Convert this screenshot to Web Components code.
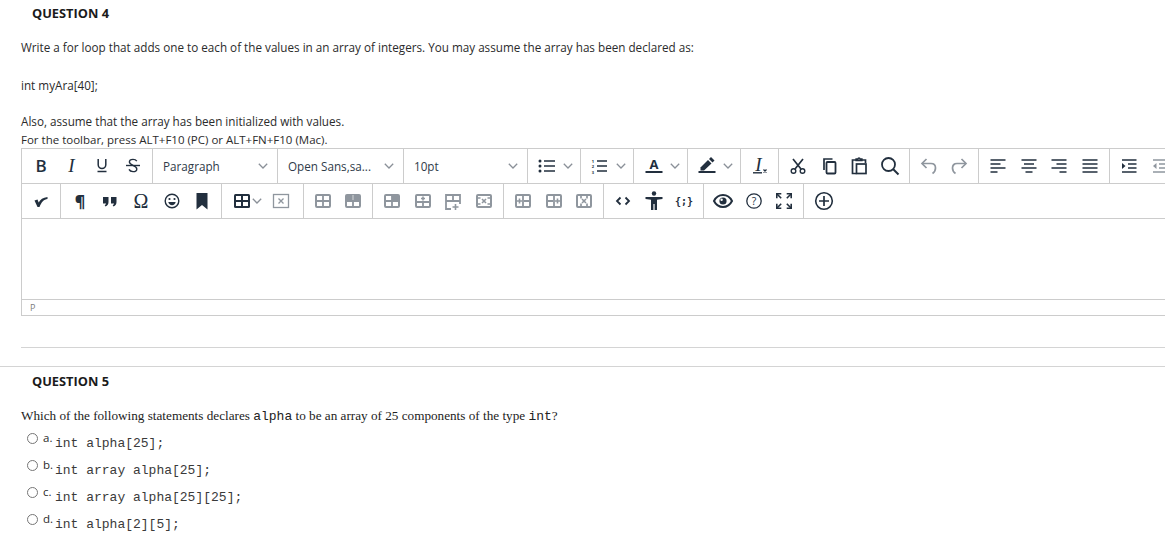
<!doctype html>
<html>
<head>
<meta charset="utf-8">
<title>Question 4 and 5</title>
<style>
html, body { margin: 0; padding: 0; background: #fff; overflow: hidden; }
body { width: 1165px; height: 554px; font-family: "Open Sans", sans-serif; color: #262626; }
</style>
</head>
<body>
<quiz-question heading="QUESTION 4">
  <quiz-line top="9" height="20">Write a for loop that adds one to each of the values in an array of integers. You may assume the array has been declared as:</quiz-line>
  <quiz-line top="18" height="20">int myAra[40];</quiz-line>
  <quiz-line top="16" height="20">Also, assume that the array has been initialized with values.</quiz-line>
  <quiz-line top="0" height="17" size="11.5">For the toolbar, press ALT+F10 (PC) or ALT+FN+F10 (Mac).</quiz-line>
  <rich-editor></rich-editor>
</quiz-question>
<quiz-question heading="QUESTION 5" ruled>
  <mc-prompt>Which of the following statements declares <code>alpha</code> to be an array of 25 components of the type <code>int</code>?</mc-prompt>
  <mc-option letter="a." code="int alpha[25];"></mc-option>
  <mc-option letter="b." code="int array alpha[25];"></mc-option>
  <mc-option letter="c." code="int array alpha[25][25];"></mc-option>
  <mc-option letter="d." code="int alpha[2][5];"></mc-option>
</quiz-question>
<script>
const dark = "#222f3e"
const grey = "#8f969e"
const stroke = (d, w = 2, col = "currentColor") =>
  `<path d="${d}" fill="none" stroke="${col}" stroke-width="${w}"/>`
const fill = (d) => `<path d="${d}" fill="currentColor"/>`
const label = (t, x, y, size, extra = "") =>
  `<text x="${x}" y="${y}" font-size="${size}" text-anchor="middle" fill="currentColor" ${extra}>${t}</text>`
const box = (x, y, w, h, col = "currentColor") =>
  `<rect x="${x}" y="${y}" width="${w}" height="${h}" fill="${col}"/>`
const sans = `font-family="Open Sans, sans-serif"`
const serifItalic = `font-family="Liberation Serif, serif" font-style="italic"`
// frame used by all the table icons
const grid = (inner) =>
  `<rect x="5" y="6" width="14" height="12" rx="1" fill="none" stroke="currentColor" stroke-width="2"/>${inner}`
const icons = {
  bold: label("B", 12, 18, 17, `${sans} font-weight="600"`),
  italic: label("I", 11.5, 18, 19, serifItalic),
  underline: stroke("M8.2 5v5.7a3.8 3.8 0 0 0 7.6 0V5", 1.5) + stroke("M7.5 17.5h9", 1.5),
  strike: stroke("M15.8 7.2C15 6 13.7 5.4 12 5.4c-2.2 0-3.6 1-3.6 2.7 0 3.4 7.4 3 7.4 6.8 0 1.7-1.6 2.7-3.8 2.7-1.8 0-3.3-.7-4-2.2", 1.4) + stroke("M5 11.5h14", 1.4),
  bullets: fill("M5 5.5a1.5 1.5 0 1 1 0 3 1.5 1.5 0 0 1 0-3zm0 5a1.5 1.5 0 1 1 0 3 1.5 1.5 0 0 1 0-3zm0 5a1.5 1.5 0 1 1 0 3 1.5 1.5 0 0 1 0-3z") + stroke("M9 7h11M9 12h11M9 17h11", 1.7),
  numlist: label("1", 5, 8.5, 4, `${sans} font-weight="700"`) + label("2", 5, 14, 4, `${sans} font-weight="700"`) + label("3", 5, 19.5, 4, `${sans} font-weight="700"`) + stroke("M9 7h10M9 12h10M9 17h10", 1.7),
  forecolor: label("A", 12, 15, 13, `${sans} font-weight="700"`) + box(3.5, 17, 17, 2),
  hilite: fill("M5.5 13.5L13 6l3.5 3.5-7.5 7H5.5z") + fill("M14 5l2-2 3.5 3.5-2 2z") + box(3.5, 17, 17, 2),
  clear: label("I", 10.5, 16.5, 19, serifItalic) + stroke("M5 18.8h9", 1.4) + stroke("M15.5 15.5l3 3M18.5 15.5l-3 3", 1.3),
  cut: `<circle cx="7.5" cy="17" r="2.3" fill="none" stroke="currentColor" stroke-width="1.4"/><circle cx="16.5" cy="17" r="2.3" fill="none" stroke="currentColor" stroke-width="1.4"/>` + stroke("M9 15L17 5M15 15L7 5", 1.7),
  copy: stroke("M15.5 5H7v11", 1.7) + `<rect x="9.5" y="8" width="9" height="11.5" rx="1" fill="none" stroke="currentColor" stroke-width="1.8"/>`,
  paste: stroke("M9 6H5.5v13.5h4", 1.7) + stroke("M9 6.5V5h2a1 1 0 0 1 2 0h2v1.5H9z", 1.3) + stroke("M15 6h3.5v3", 1.7) + `<rect x="9.5" y="10" width="9.5" height="9.5" fill="none" stroke="currentColor" stroke-width="1.7"/>`,
  search: `<circle cx="10.5" cy="10.5" r="6.5" fill="none" stroke="currentColor" stroke-width="1.8"/>` + stroke("M15 15l5.5 5.5", 2),
  undo: stroke("M9.5 5L5 9.5 9.5 14", 1.7) + stroke("M5.5 9.5H14c3 0 4.5 2 4.5 4.5s-1.5 4.5-3 5.5", 1.7),
  redo: stroke("M14.5 5L19 9.5 14.5 14", 1.7) + stroke("M18.5 9.5H10c-3 0-4.5 2-4.5 4.5s1.5 4.5 3 5.5", 1.7),
  alignl: stroke("M4.5 6h15M4.5 10h10M4.5 14h15M4.5 18h7", 1.7),
  alignc: stroke("M4.5 6h15M7 10h10M4.5 14h15M8.5 18h7", 1.7),
  alignr: stroke("M4.5 6h15M9.5 10h10M4.5 14h15M12.5 18h7", 1.7),
  alignj: stroke("M4.5 6h15M4.5 10h15M4.5 14h15M4.5 18h15", 1.7),
  indent: stroke("M5 6h14.5M11 10h8.5M11 14h8.5M5 18h14.5", 1.7) + fill("M5 9l3.5 3L5 15z"),
  outdent: stroke("M5 6h14.5M11 10h8.5M11 14h8.5M5 18h14.5", 1.7) + fill("M8.5 9L5 12l3.5 3z"),
  check: fill("M5.5 11.5l3-1 1.2 3c1.5-3 4.3-5 8.8-5.5v2c-3.500.3-6 3-8 8H8.5z"),
  para: label("¶", 12, 17.5, 16, `${sans} font-weight="800"`),
  quote: fill("M5 8h5.5v5c0 2-1 3.5-3 4.5l-.8-1.3c.8-.4 1.3-1 1.3-1.7H5zM13 8h5.5v5c0 2-1 3.5-3 4.5l-.8-1.3c.8-.4 1.3-1 1.3-1.7H13z"),
  omega: label("Ω", 12, 19, 20, `font-family="Liberation Serif, serif"`),
  smile: `<circle cx="12" cy="12" r="6.8" fill="none" stroke="currentColor" stroke-width="1.4"/><circle cx="9.5" cy="10" r="1.1" fill="currentColor"/><circle cx="14.5" cy="10" r="1.1" fill="currentColor"/>` + fill("M8.3 13h7.4c-.3 2-1.8 3.2-3.7 3.2S8.6 15 8.3 13z"),
  bookmark: fill("M6.5 4h11v16.5L12 16l-5.5 4.5z"),
  table: `<rect x="4" y="5" width="16" height="14" rx="1.5" fill="currentColor"/>` + box(6, 7, 5, 4, "#fff") + box(13, 7, 5, 4, "#fff") + box(6, 13, 5, 4, "#fff") + box(13, 13, 5, 4, "#fff"),
  tabledel: `<rect x="4.5" y="5.5" width="15" height="13" fill="none" stroke="currentColor" stroke-width="1.3"/>` + stroke("M9.5 9.5l5 5M14.5 9.5l-5 5", 1.3),
  rowprops: grid(stroke("M12 6v12M5 12h14", 1.8)),
  cellprops: grid(box(5, 6, 14, 6) + box(11.4, 6, 1.2, 6, "#c9ccd0") + stroke("M12 12v6M5 12h14", 1.8)),
  merge: grid(box(12, 6, 7, 6) + stroke("M12 6v12M5 12h14", 1.8)),
  rowbefore: grid(stroke("M5 13h14M12 13v5", 1.8) + stroke("M12 7.5v4M10 9.5h4", 1.6)),
  rowafter: stroke("M10 20H5V6h14v9M5 12h14M12 6v6", 1.8) + stroke("M14.5 15v6M11.5 18h6", 1.6),
  rowdel: grid(stroke("M5 9h3.5M15.5 9H19M5 15h3.5M15.5 15H19", 1.7) + stroke("M10 10l4 4M14 10l-4 4", 1.6)),
  colbefore: grid(stroke("M12 6v12M13 12h6", 1.8) + stroke("M8.5 9.5v5M6 12h5", 1.6)),
  colafter: grid(stroke("M12 6v12M5 12h6", 1.8) + stroke("M15.5 9.5v5M13 12h5", 1.6)),
  coldel: grid(stroke("M9 6v3.5M9 14.5V18M15 6v3.5M15 14.5V18", 1.7) + stroke("M10 10l4 4M14 10l-4 4", 1.6)),
  code: stroke("M9.5 8.5L6 12l3.5 3.5M14.5 8.5L18 12l-3.5 3.5", 1.8),
  a11y: `<circle cx="12" cy="4.5" r="2.2" fill="currentColor"/>` + fill("M3.5 8h17v2L15 10.8V21h-2.4v-6h-1.2v6H9V10.8L3.5 10z"),
  template: label("{;}", 12, 15.5, 10, `font-family="DejaVu Sans Mono, monospace" font-weight="700"`),
  preview: stroke("M3 12c2-4 5.3-6 9-6s7 2 9 6c-2 4-5.3 6-9 6s-7-2-9-6z", 2) + `<circle cx="12" cy="12" r="3.6" fill="currentColor"/><circle cx="10.6" cy="10.8" r="1.2" fill="#fff"/>`,
  help: `<circle cx="12" cy="12" r="7.2" fill="none" stroke="currentColor" stroke-width="1.3"/>` + label("?", 12, 15.8, 10.5, `${sans} font-weight="400"`),
  fullscreen: stroke("M4.8 9.3V4.8h4.5M19.2 9.3V4.8h-4.5M4.8 14.7v4.5h4.5M19.2 14.7v4.5h-4.5", 1.6) + stroke("M5 5l4.2 4.2M19 5l-4.2 4.2M5 19l4.2-4.2M19 19l-4.2-4.2", 1.6),
  plus: `<circle cx="12" cy="12" r="8.3" fill="none" stroke="currentColor" stroke-width="1.6"/>` + stroke("M12 7v10M7 12h10", 1.7),
}
const chevron = `<svg width="10" height="6" viewBox="0 0 10 6"><path d="M.8.8L5 5l4.2-4.2" fill="none" stroke="#8a9098" stroke-width="1.3"/></svg>`

class QuizQuestion extends HTMLElement {
  constructor() {
    super()
    const ruled = this.hasAttribute("ruled")
    this.attachShadow({ mode: "open" }).innerHTML = `
<style>
:host { display: block; ${ruled ? "border-top: 1px solid #d4d4d4;" : ""} }
h2 { margin: 0; padding: ${ruled ? 1 : 0}px 0 2px 32px; font: 700 12.8px/26px "Open Sans", sans-serif; color: #1b1b1b; }
</style>
<h2>${this.getAttribute("heading")}</h2>
<slot></slot>`
  }
}
customElements.define("quiz-question", QuizQuestion)

class QuizLine extends HTMLElement {
  constructor() {
    super()
    const top = this.getAttribute("top")
    const h = this.getAttribute("height")
    const size = this.getAttribute("size") || 11.7
    this.attachShadow({ mode: "open" }).innerHTML = `
<style>
:host { display: block; margin: ${top}px 0 0 21px; font: 400 ${size}px/${h}px "Open Sans", sans-serif; color: #2b2b2b; white-space: nowrap; }
</style>
<slot></slot>`
  }
}
customElements.define("quiz-line", QuizLine)

class ToolBtn extends HTMLElement {
  constructor() {
    super()
    const off = this.hasAttribute("off")
    const chev = this.hasAttribute("chev")
    const gap = this.getAttribute("gap") || 4
    const left = this.getAttribute("left") || 0
    this.attachShadow({ mode: "open" }).innerHTML = `
<style>
:host { display: flex; align-items: center; justify-content: center; flex: none; height: 100%; min-width: 30.67px; margin-left: ${left}px; color: ${off ? grey : dark}; }
svg.i { display: block; width: 24px; height: 24px; }
span { display: ${chev ? "block" : "none"}; margin-left: ${gap}px; line-height: 0; }
</style>
<svg class="i" viewBox="0 0 24 24">${icons[this.getAttribute("name")]}</svg><span>${chevron}</span>`
  }
}
customElements.define("tool-btn", ToolBtn)

class ToolSelect extends HTMLElement {
  constructor() {
    super()
    this.attachShadow({ mode: "open" }).innerHTML = `
<style>
:host { display: flex; align-items: center; justify-content: space-between; height: 100%; width: 100%; box-sizing: border-box; padding: 0 9px 0 10px; font: 400 11.7px "Open Sans", sans-serif; color: #2f3b49; white-space: nowrap; }
</style>
<span><slot></slot></span>${chevron}`
  }
}
customElements.define("tool-select", ToolSelect)

class ToolGroup extends HTMLElement {
  constructor() {
    super()
    const w = this.getAttribute("w")
    const last = this.hasAttribute("last")
    this.attachShadow({ mode: "open" }).innerHTML = `
<style>
:host { display: flex; align-items: center; justify-content: center; flex: none; box-sizing: border-box; height: 100%; width: ${w}px; ${last ? "" : "border-right: 1px solid #ccc;"} }
</style>
<slot></slot>`
  }
}
customElements.define("tool-group", ToolGroup)

class ToolRow extends HTMLElement {
  constructor() {
    super()
    this.attachShadow({ mode: "open" }).innerHTML = `
<style>
:host { display: flex; box-sizing: border-box; height: 35px; border-bottom: 1px solid #ccc; }
</style>
<slot></slot>`
  }
}
customElements.define("tool-row", ToolRow)

class RichEditor extends HTMLElement {
  constructor() {
    super()
    this.attachShadow({ mode: "open" }).innerHTML = `
<style>
:host { display: block; box-sizing: border-box; width: 1165px; margin-left: 21px; border: 1px solid #ccc; border-right: 0; overflow: hidden; }
.area { height: 80px; }
.status { box-sizing: border-box; height: 16px; border-top: 1px solid #ccc; padding-left: 8px; font: 400 9px/15px "Open Sans", sans-serif; color: #7c7c7c; }
</style>
<tool-row>
  <tool-group w="131"><tool-btn name="bold"></tool-btn><tool-btn name="italic"></tool-btn><tool-btn name="underline"></tool-btn><tool-btn name="strike"></tool-btn></tool-group>
  <tool-group w="125"><tool-select>Paragraph</tool-select></tool-group>
  <tool-group w="126"><tool-select>Open Sans,sa...</tool-select></tool-group>
  <tool-group w="124"><tool-select>10pt</tool-select></tool-group>
  <tool-group w="53"><tool-btn name="bullets" chev></tool-btn></tool-group>
  <tool-group w="53"><tool-btn name="numlist" chev></tool-btn></tool-group>
  <tool-group w="54"><tool-btn name="forecolor" chev></tool-btn></tool-group>
  <tool-group w="53"><tool-btn name="hilite" chev></tool-btn></tool-group>
  <tool-group w="38"><tool-btn name="clear"></tool-btn></tool-group>
  <tool-group w="131"><tool-btn name="cut"></tool-btn><tool-btn name="copy"></tool-btn><tool-btn name="paste"></tool-btn><tool-btn name="search"></tool-btn></tool-group>
  <tool-group w="69"><tool-btn name="undo" off></tool-btn><tool-btn name="redo" off></tool-btn></tool-group>
  <tool-group w="131"><tool-btn name="alignl"></tool-btn><tool-btn name="alignc"></tool-btn><tool-btn name="alignr"></tool-btn><tool-btn name="alignj"></tool-btn></tool-group>
  <tool-group w="69" last><tool-btn name="indent"></tool-btn><tool-btn name="outdent" off></tool-btn></tool-group>
</tool-row>
<tool-row>
  <tool-group w="39"><tool-btn name="check"></tool-btn></tool-group>
  <tool-group w="161"><tool-btn name="para"></tool-btn><tool-btn name="quote"></tool-btn><tool-btn name="omega"></tool-btn><tool-btn name="smile"></tool-btn><tool-btn name="bookmark"></tool-btn></tool-group>
  <tool-group w="82"><tool-btn name="table" chev gap="-2" left="1"></tool-btn><tool-btn name="tabledel" off left="4"></tool-btn></tool-group>
  <tool-group w="69"><tool-btn name="rowprops" off></tool-btn><tool-btn name="cellprops" off></tool-btn></tool-group>
  <tool-group w="131"><tool-btn name="merge" off></tool-btn><tool-btn name="rowbefore" off></tool-btn><tool-btn name="rowafter" off></tool-btn><tool-btn name="rowdel" off></tool-btn></tool-group>
  <tool-group w="100"><tool-btn name="colbefore" off></tool-btn><tool-btn name="colafter" off></tool-btn><tool-btn name="coldel" off></tool-btn></tool-group>
  <tool-group w="100"><tool-btn name="code"></tool-btn><tool-btn name="a11y"></tool-btn><tool-btn name="template"></tool-btn></tool-group>
  <tool-group w="100"><tool-btn name="preview"></tool-btn><tool-btn name="help"></tool-btn><tool-btn name="fullscreen"></tool-btn></tool-group>
  <tool-group w="40" last><tool-btn name="plus"></tool-btn></tool-group>
</tool-row>
<div class="area"></div>
<div class="status">P</div>`
  }
  connectedCallback() {
    // the thin line under the editor belongs to the question block
    if (this.nextElementSibling) return
    this.after(document.createElement("editor-rule"))
  }
}
customElements.define("rich-editor", RichEditor)

class EditorRule extends HTMLElement {
  constructor() {
    super()
    this.attachShadow({ mode: "open" }).innerHTML = `
<style>
:host { display: block; height: 18px; margin: 31px 0 0 21px; border-top: 1px solid #d4d4d4; }
</style>`
  }
}
customElements.define("editor-rule", EditorRule)

class McPrompt extends HTMLElement {
  constructor() {
    super()
    this.attachShadow({ mode: "open" }).innerHTML = `
<style>
:host { display: block; margin: 10px 0 0 21px; font: 400 13.2px/20px "Liberation Serif", serif; color: #222; white-space: nowrap; }
::slotted(code) { font: 400 13px "Liberation Mono", monospace; }
</style>
<slot></slot>`
  }
}
customElements.define("mc-prompt", McPrompt)

class McOption extends HTMLElement {
  constructor() {
    super()
    this.attachShadow({ mode: "open" }).innerHTML = `
<style>
:host { display: flex; height: 27px; padding-left: 27px; box-sizing: border-box; align-items: flex-start; }
i { flex: none; box-sizing: border-box; width: 11px; height: 11px; margin-top: 7px; border: 1px solid #767676; border-radius: 50%; background: #fff; }
b { flex: none; width: 12px; margin-left: 5px; padding-top: 4px; font: 400 11.5px/16px "Open Sans", sans-serif; color: #2b2b2b; }
code { padding-top: 10px; font: 400 13px/16px "Liberation Mono", monospace; color: #3a3a3a; white-space: pre; }
</style>
<i></i><b>${this.getAttribute("letter")}</b><code>${this.getAttribute("code")}</code>`
  }
}
customElements.define("mc-option", McOption)
</script>
</body>
</html>
